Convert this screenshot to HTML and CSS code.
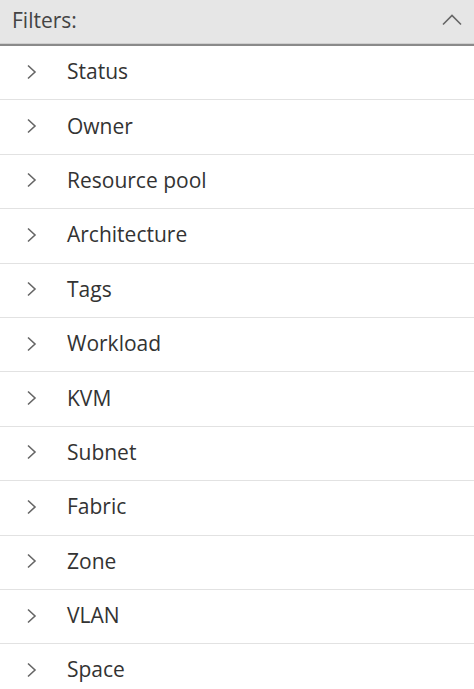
FILE: index.html
```html
<!DOCTYPE html>
<html>
<head>
<meta charset="utf-8">
<link rel="stylesheet" href="styles.css">
</head>
<body>
<div class="panel">
  <div class="header">
    <span class="title">Filters:</span>
    <svg class="up" width="20" height="12" viewBox="0 0 20 12"><path d="M1 10.5 L10 1.5 L19 10.5" fill="none" stroke="#666" stroke-width="1.6"/></svg>
  </div>
  <ul class="list">
    <li class="item"><svg class="chev" width="12" height="16" viewBox="0 0 12 16"><path d="M2 1.5 L9 8 L2 14.5" fill="none" stroke="#666" stroke-width="1.6"/></svg><span>Status</span></li>
    <li class="item"><svg class="chev" width="12" height="16" viewBox="0 0 12 16"><path d="M2 1.5 L9 8 L2 14.5" fill="none" stroke="#666" stroke-width="1.6"/></svg><span>Owner</span></li>
    <li class="item"><svg class="chev" width="12" height="16" viewBox="0 0 12 16"><path d="M2 1.5 L9 8 L2 14.5" fill="none" stroke="#666" stroke-width="1.6"/></svg><span>Resource pool</span></li>
    <li class="item"><svg class="chev" width="12" height="16" viewBox="0 0 12 16"><path d="M2 1.5 L9 8 L2 14.5" fill="none" stroke="#666" stroke-width="1.6"/></svg><span>Architecture</span></li>
    <li class="item"><svg class="chev" width="12" height="16" viewBox="0 0 12 16"><path d="M2 1.5 L9 8 L2 14.5" fill="none" stroke="#666" stroke-width="1.6"/></svg><span>Tags</span></li>
    <li class="item"><svg class="chev" width="12" height="16" viewBox="0 0 12 16"><path d="M2 1.5 L9 8 L2 14.5" fill="none" stroke="#666" stroke-width="1.6"/></svg><span>Workload</span></li>
    <li class="item"><svg class="chev" width="12" height="16" viewBox="0 0 12 16"><path d="M2 1.5 L9 8 L2 14.5" fill="none" stroke="#666" stroke-width="1.6"/></svg><span>KVM</span></li>
    <li class="item"><svg class="chev" width="12" height="16" viewBox="0 0 12 16"><path d="M2 1.5 L9 8 L2 14.5" fill="none" stroke="#666" stroke-width="1.6"/></svg><span>Subnet</span></li>
    <li class="item"><svg class="chev" width="12" height="16" viewBox="0 0 12 16"><path d="M2 1.5 L9 8 L2 14.5" fill="none" stroke="#666" stroke-width="1.6"/></svg><span>Fabric</span></li>
    <li class="item"><svg class="chev" width="12" height="16" viewBox="0 0 12 16"><path d="M2 1.5 L9 8 L2 14.5" fill="none" stroke="#666" stroke-width="1.6"/></svg><span>Zone</span></li>
    <li class="item"><svg class="chev" width="12" height="16" viewBox="0 0 12 16"><path d="M2 1.5 L9 8 L2 14.5" fill="none" stroke="#666" stroke-width="1.6"/></svg><span>VLAN</span></li>
    <li class="item"><svg class="chev" width="12" height="16" viewBox="0 0 12 16"><path d="M2 1.5 L9 8 L2 14.5" fill="none" stroke="#666" stroke-width="1.6"/></svg><span>Space</span></li>
  </ul>
</div>
</body>
</html>
```
FILE: styles.css
```css
html, body {
  margin: 0;
  padding: 0;
  background: #fff;
}
body {
  font-family: "Open Sans", "Noto Sans", sans-serif;
  color: #333;
}
.panel {
  width: 474px;
}
.header {
  height: 46px;
  box-sizing: border-box;
  background: #e6e6e6;
  border-bottom: 2px solid #8a8a8a;
  box-shadow: inset 0 -1px 0 #cfcfcf;
  display: flex;
  align-items: center;
  justify-content: space-between;
  padding: 0 12px 4px 12px;
}
.title {
  font-size: 21px;
  color: #444;
}
.list {
  list-style: none;
  margin: 0;
  padding: 0;
}
.item {
  height: 53.4px;
  box-sizing: content-box;
  border-bottom: 1px solid #e2e2e2;
  display: flex;
  align-items: center;
  font-size: 21px;
  color: #333;
}
.item span {
  margin-top: -3px;
}
.chev {
  margin-left: 26px;
  margin-right: 29px;
  margin-top: -2px;
  flex: none;
}
```
